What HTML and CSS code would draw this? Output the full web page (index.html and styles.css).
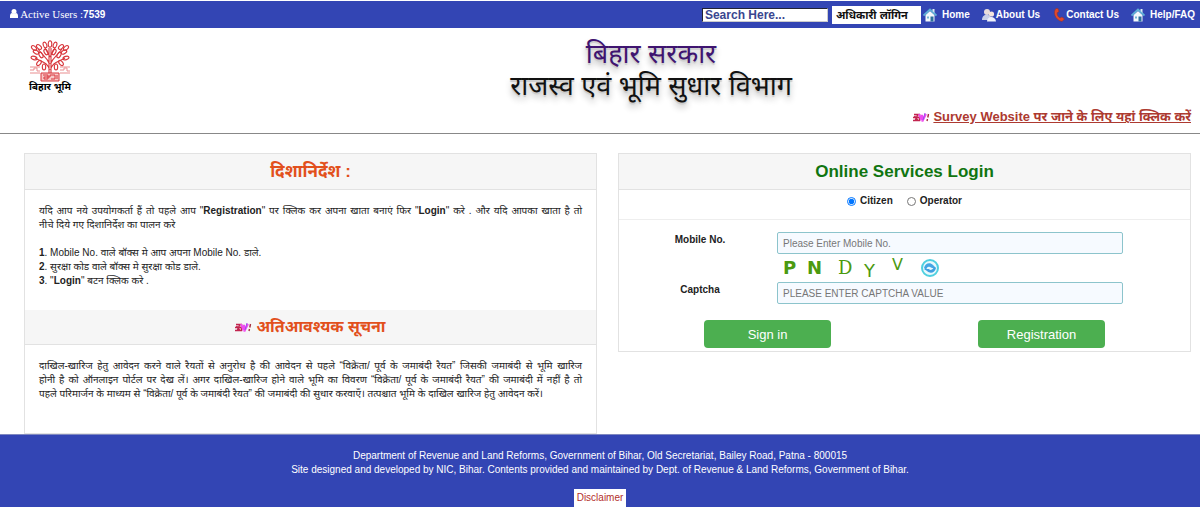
FILE: index.html
```html
<!DOCTYPE html>
<html lang="hi">
<head>
    <meta charset="UTF-8">
    <meta name="viewport" content="width=device-width, initial-scale=1.0">
    <title>बिहार भूमि</title>
    <link rel="stylesheet" href="styles.css">
</head>
<body>
    <svg class="sprite" aria-hidden="true">
        <symbol id="icon-new" viewBox="0 0 17 9">
            <path d="M1 1.5h6M0 7.5h7M1.5 3l3 4M5 1L2 8M6.5 1v7M0 4.5h6" stroke="#c2254f" stroke-width="1.5" fill="none"/>
            <path d="M6 1l2 5 1-4 1 5 3-6" stroke="#ee4df0" stroke-width="2" fill="none"/>
            <path d="M12 0l-2 7" stroke="#9b48ee" fill="none"/>
            <path d="M15.5 1l-.7 3.5M14.5 6l-.5 2" stroke="#a32b3c" stroke-width="1.4" fill="none"/>
        </symbol>
        <symbol id="icon-home" viewBox="0 0 14 14">
            <path d="M2.5 7L7 3l4.5 4v6.500h-9z" fill="#f3f8fb"/>
            <path d="M.5 7.500L7 1.500l6.500 6" fill="none" stroke="#5fb0d6" stroke-width="1.800"/>
            <path d="M9.500 1h2v4l-2-2z" fill="#d9ecf4"/>
            <path d="M7.500 8.500h3v5h-3z" fill="#2c6f9c"/>
            <path d="M4 8.500h2v2H4z" fill="#76b5d2"/>
        </symbol>
        <symbol id="icon-users" viewBox="0 0 14 14">
            <circle cx="5" cy="4" r="3" fill="#e8dcdc"/>
            <path d="M0 12c0-7 9-7 10 0z" fill="#c9cfe8"/>
            <circle cx="9.500" cy="6" r="2.600" fill="#f4e6dd"/>
            <path d="M5 13.500c0-6 8.500-6 9 0z" fill="#eef1fa"/>
        </symbol>
        <symbol id="icon-phone" viewBox="0 0 12 14">
            <path d="M3 .5C-.5 4 2 12 9 13.500l2.500-2.500-2.500-2-2 1C4.500 8.500 4 6.500 4.200 4.800L6 3.500 5 .5z" fill="#e0492b" stroke="#8e2f2d" stroke-width=".5"/>
        </symbol>
    </svg>

    <nav class="topbar">
        <div class="active-users">
            <svg class="user-icon" viewBox="0 0 8 9" aria-hidden="true">
                <circle cx="4" cy="2.500" r="2.500"/>
                <path d="M0 9V7c0-2 1-3 2-3 1 1 3 1 4 0 1 0 2 1 2 3v2z"/>
            </svg>
            Active Users :<b>7539</b>
        </div>
        <input class="search" type="text" placeholder="Search Here..." aria-label="Search">
        <a class="officer-login" href="#">अधिकारी लॉगिन</a>
        <ul class="menu">
            <li><a class="spaced" href="#"><svg class="icon"><use href="#icon-home"/></svg>Home</a></li>
            <li><a href="#"><svg class="icon"><use href="#icon-users"/></svg>About Us</a></li>
            <li><a href="#"><svg class="icon"><use href="#icon-phone"/></svg>Contact Us</a></li>
            <li><a class="spaced" href="#"><svg class="icon"><use href="#icon-home"/></svg>Help/FAQ</a></li>
        </ul>
    </nav>

    <header class="header">
        <div class="logo">
            <svg class="tree" viewBox="0 0 42 42" aria-hidden="true">
                <g fill="none" stroke="#d8373c" stroke-width="1.100">
                    <path d="M20 33V8M22 33V8M20.500 30C19 22 12 22 6 18M21.500 30C23 22 30 22 36 18M20.500 24C18 17 14 16 9 9M21.500 24C24 17 28 16 33 9M21 17l-5-9M21 17l5-9"/>
                    <ellipse cx="21" cy="4" rx="1.800" ry="3.200"/>
                    <ellipse cx="16" cy="5" rx="1.700" ry="3" transform="rotate(-20 16 5)"/>
                    <ellipse cx="26" cy="5" rx="1.700" ry="3" transform="rotate(20 26 5)"/>
                    <ellipse cx="17" cy="12" rx="1.700" ry="3" transform="rotate(-30 17 12)"/>
                    <ellipse cx="25" cy="12" rx="1.700" ry="3" transform="rotate(30 25 12)"/>
                    <ellipse cx="10" cy="7" rx="1.700" ry="3" transform="rotate(-50 10 7)"/>
                    <ellipse cx="32" cy="7" rx="1.700" ry="3" transform="rotate(50 32 7)"/>
                    <ellipse cx="5" cy="8" rx="1.700" ry="3" transform="rotate(-50 5 8)"/>
                    <ellipse cx="37" cy="8" rx="1.700" ry="3" transform="rotate(50 37 8)"/>
                    <ellipse cx="7" cy="12" rx="1.700" ry="3" transform="rotate(-60 7 12)"/>
                    <ellipse cx="35" cy="12" rx="1.700" ry="3" transform="rotate(60 35 12)"/>
                    <ellipse cx="5" cy="18" rx="1.700" ry="3" transform="rotate(-75 5 18)"/>
                    <ellipse cx="37" cy="18" rx="1.700" ry="3" transform="rotate(75 37 18)"/>
                    <ellipse cx="12" cy="15" rx="1.700" ry="3" transform="rotate(-30 12 15)"/>
                    <ellipse cx="30" cy="15" rx="1.700" ry="3" transform="rotate(30 30 15)"/>
                    <ellipse cx="10" cy="23" rx="1.700" ry="3" transform="rotate(40 10 23)"/>
                    <ellipse cx="32" cy="23" rx="1.700" ry="3" transform="rotate(-40 32 23)"/>
                    <ellipse cx="15" cy="27" rx="1.700" ry="3"/>
                    <ellipse cx="27" cy="27" rx="1.700" ry="3"/>
                </g>
                <path d="M12 33h18v8H12z" fill="#f8c9c9" stroke="#d8373c"/>
                <path d="M14 35h5v4h-4v-2h6v-2h5v4h-4M28 35v4" fill="none" stroke="#d8373c"/>
                <path d="M1 27h10M31 27h10M1 30h4v-2h3v3h3M31 30h4v-2h3v3h3M1 33h10M31 33h10" fill="none" stroke="#e98d8f"/>
            </svg>
            <span class="logo-name">बिहार भूमि</span>
        </div>
        <h1 class="site-title"><span>बिहार सरकार</span>राजस्व एवं भूमि सुधार विभाग</h1>
        <div class="survey">
            <svg class="icon-new"><use href="#icon-new"/></svg>
            <a href="#">Survey Website पर जाने के लिए यहां क्लिक करें</a>
        </div>
    </header>

    <main class="content">
        <section class="panel">
            <h2 class="panel-title">दिशानिर्देश :</h2>
            <div class="panel-text guide">
                <p>यदि आप नये उपयोगकर्ता हैं तो पहले आप "<b>Registration</b>" पर क्लिक कर अपना खाता बनाएं फिर "<b>Login</b>" करे . और यदि आपका खाता है तो <span class="keep">नीचे दिये गए</span> दिशानिर्देश का पालन करे</p>
                <p>
                    <b>1</b>. Mobile No. वाले बॉक्स मे आप अपना Mobile No. डाले.<br>
                    <b>2</b>. सुरक्षा कोड वाले बॉक्स मे सुरक्षा कोड डाले.<br>
                    <b>3</b>. "<b>Login</b>" बटन क्लिक करे .
                </p>
            </div>
            <h2 class="panel-title notice-title"><svg class="icon-new"><use href="#icon-new"/></svg>अतिआवश्यक सूचना</h2>
            <div class="panel-text notice">
                <p>दाखिल-खारिज हेतु आवेदन करने वाले रैयतों से अनुरोध है की आवेदन से पहले “विक्रेता/ पूर्व के जमाबंदी रैयत” जिसकी जमाबंदी से भूमि खारिज <span class="keep">होनी है को</span> ऑनलाइन पोर्टल पर देख लें। अगर दाखिल-खारिज होने वाले भूमि का विवरण “विक्रेता/ पूर्व के जमाबंदी रैयत” की जमाबंदी में नहीं है तो <span class="keep">पहले परिमार्जन के</span> माध्यम से “विक्रेता/ पूर्व के जमाबंदी रैयत” की जमाबंदी की सुधार करवाएँ। तत्पश्चात भूमि के दाखिल खारिज हेतु आवेदन करें।</p>
            </div>
        </section>

        <section class="panel">
            <h2 class="panel-title login-title">Online Services Login</h2>
            <form class="login-form">
                <div class="user-type">
                    <label><input type="radio" name="user_type" value="citizen" checked>Citizen</label>
                    <label><input type="radio" name="user_type" value="operator">Operator</label>
                </div>
                <div class="fields">
                    <label for="mobile">Mobile No.</label>
                    <input type="text" id="mobile" placeholder="Please Enter Mobile No.">
                    <div class="captcha">
                        <span class="c-bold">P</span>
                        <span class="c-bold">N</span>
                        <span class="c-serif">D</span>
                        <span class="c-low">Y</span>
                        <span class="c-high">V</span>
                        <button class="refresh" type="button" aria-label="Refresh captcha">
                            <svg viewBox="0 0 18 18">
                                <circle cx="9" cy="9" r="8" fill="#e9f9fc" stroke="#4fd0e0" stroke-width="2"/>
                                <path d="M3 9c1-5 6-6 9-3l3 3h-4l-2-1C7 7 6 8 5 11z" fill="#45a6e4"/>
                                <path d="M15 9c-1 5-6 6-9 3l-3-2h5l1 1c2 0 3-1 4-3z" fill="#3f9fe0"/>
                            </svg>
                        </button>
                    </div>
                    <label for="captcha">Captcha</label>
                    <input type="text" id="captcha" placeholder="PLEASE ENTER CAPTCHA VALUE">
                </div>
                <div class="actions">
                    <button class="btn" type="submit">Sign in</button>
                    <button class="btn" type="button">Registration</button>
                </div>
            </form>
        </section>
    </main>

    <footer class="footer">
        <p>Department of Revenue and Land Reforms, Government of Bihar, Old Secretariat, Bailey Road, Patna - 800015<br>
        Site designed and developed by NIC, Bihar. Contents provided and maintained by Dept. of Revenue &amp; Land Reforms, Government of Bihar.</p>
        <a class="disclaimer" href="#">Disclaimer</a>
    </footer>
</body>
</html>
```
FILE: styles.css
```css
* {
    box-sizing: border-box;
}
body {
    margin: 0;
    padding-top: 1px;
    font-family: "Liberation Sans", Arial, "Noto Sans Devanagari", sans-serif;
    font-size: 10px;
    line-height: 14px;
    color: #222;
    background: #fff;
}
h1,
h2,
p {
    margin: 0;
}
.sprite {
    display: none;
}

/* top bar */
.topbar {
    display: flex;
    align-items: center;
    height: 27px;
    padding: 0 5px 0 10px;
    background: #3345b4;
    color: #fff;
}
.active-users {
    margin-right: auto;
    font-family: "Liberation Serif", "Times New Roman", serif;
    font-size: 11px;
}
.active-users b {
    font-family: "Liberation Sans", Arial, sans-serif;
    font-size: 10px;
}
.user-icon {
    width: 8px;
    height: 9px;
    fill: #fff;
}
.search {
    width: 126px;
    height: 14px;
    margin-right: 4px;
    padding: 0 2px;
    border: 1px solid #223;
    border-right-color: #ccc;
    border-bottom-color: #ccc;
    font: bold 12px "Liberation Sans", Arial, sans-serif;
}
.search::placeholder {
    color: #3a4690;
}
.officer-login {
    width: 89px;
    height: 18px;
    padding-left: 4px;
    background: #fff;
    color: #111;
    font-size: 11px;
    font-weight: bold;
    line-height: 18px;
    text-decoration: none;
    white-space: nowrap;
}
.menu {
    display: flex;
    gap: 12px;
    margin: 0 0 0 2px;
    padding: 0;
    list-style: none;
}
.menu a {
    display: flex;
    align-items: center;
    color: #fff;
    font-weight: bold;
    text-decoration: none;
    white-space: nowrap;
}
.menu a.spaced {
    gap: 5px;
}
.icon {
    width: 14px;
    height: 14px;
}

/* header */
.header {
    display: grid;
    grid-template-columns: 87px 1fr;
    grid-template-rows: 78px 27px;
    padding: 0 9px 0 24px;
    border-bottom: 1px solid #888;
}
.logo {
    display: flex;
    flex-direction: column;
    align-items: center;
    width: 52px;
    padding-top: 12px;
}
.tree {
    width: 42px;
    height: 42px;
}
.logo-name {
    color: #000;
    font-size: 10px;
    font-weight: bold;
    line-height: 10px;
    white-space: nowrap;
}
.site-title {
    padding-top: 10px;
    color: #111;
    font-size: 27px;
    font-weight: normal;
    line-height: 32px;
    text-align: center;
    text-shadow: 0 2px 1px #ccc, 0 5px 6px rgba(0, 0, 0, 0.3);
    white-space: nowrap;
}
.site-title span {
    display: block;
    color: #3f1470;
}
.survey {
    grid-column: 1 / -1;
    display: flex;
    align-items: flex-start;
    justify-content: flex-end;
    gap: 3px;
}
.survey a {
    color: #ad3a31;
    font-size: 13px;
    font-weight: bold;
    line-height: 22px;
}
.icon-new {
    width: 17px;
    height: 9px;
}
.survey .icon-new {
    margin-top: 7px;
}

/* panels */
.content {
    display: grid;
    grid-template-columns: 1fr 1fr;
    align-items: start;
    gap: 21px;
    padding: 19px 9px 0 24px;
}
.panel {
    border: 1px solid #e2e2e2;
}
.panel-title {
    display: flex;
    align-items: center;
    justify-content: center;
    height: 36px;
    border-bottom: 1px solid #e2e2e2;
    background: #f6f6f6;
    color: #e2501c;
    font-size: 17px;
    line-height: 24px;
}
.login-title {
    color: #107510;
}
.notice-title {
    gap: 4px;
    height: 35px;
    font-size: 16px;
}
.panel-text {
    padding: 14px 14px 0;
    text-align: justify;
}
.panel-text p {
    margin-bottom: 14px;
}
.keep {
    white-space: nowrap;
}
.guide {
    height: 120px;
}
.notice {
    height: 88px;
}

/* login form */
.user-type {
    display: flex;
    justify-content: center;
    gap: 14px;
    height: 30px;
    padding-top: 4px;
    border-bottom: 1px solid #eee;
    font-weight: bold;
}
.user-type label {
    display: flex;
    align-items: center;
    gap: 4px;
    height: 14px;
}
.user-type input {
    width: 9px;
    height: 9px;
    margin: 0;
}
.fields {
    display: grid;
    grid-template-columns: 158px 346px;
    grid-template-rows: 22px 28px 22px;
    padding-top: 12px;
}
.fields label {
    padding: 1px 0 0 4px;
    font-weight: bold;
    text-align: center;
}
.fields input {
    width: 100%;
    height: 22px;
    padding: 0 5px;
    border: 1px solid #8cc4cc;
    border-radius: 2px;
    background: #f6faff;
    font: 10px "Liberation Sans", Arial, sans-serif;
}
.fields input::placeholder {
    color: #777;
}
.captcha {
    grid-column: 2;
    display: grid;
    grid-template-columns: 24px 31px 26px 28px 29px 18px;
    align-items: center;
    padding-left: 6px;
    color: #4b9a10;
    font-size: 18px;
    line-height: 22px;
}
.c-bold {
    font-family: "DejaVu Sans", sans-serif;
    font-weight: bold;
}
.c-serif {
    font-family: "DejaVu Serif", serif;
}
.c-low {
    align-self: end;
    font-family: "DejaVu Sans", sans-serif;
}
.c-high {
    align-self: start;
    font-family: "DejaVu Sans", sans-serif;
    font-size: 16px;
}
.refresh {
    width: 18px;
    height: 18px;
    padding: 0;
    border: 0;
    background: none;
}
.refresh svg {
    display: block;
}
.actions {
    display: flex;
    justify-content: space-between;
    padding: 16px 85px 3px;
}
.btn {
    width: 127px;
    height: 28px;
    border: 0;
    border-radius: 4px;
    background: #4caf50;
    color: #fff;
    font: 13px "Liberation Sans", Arial, sans-serif;
}

/* footer */
.footer {
    padding: 14px 0 0;
    border-top: 1px solid #7f88c0;
    background: #3345b4;
    color: #fff;
    text-align: center;
}
.disclaimer {
    display: inline-block;
    margin-top: 12px;
    padding: 2px 3px;
    background: #fff;
    color: #b3302c;
    text-decoration: none;
}
```
